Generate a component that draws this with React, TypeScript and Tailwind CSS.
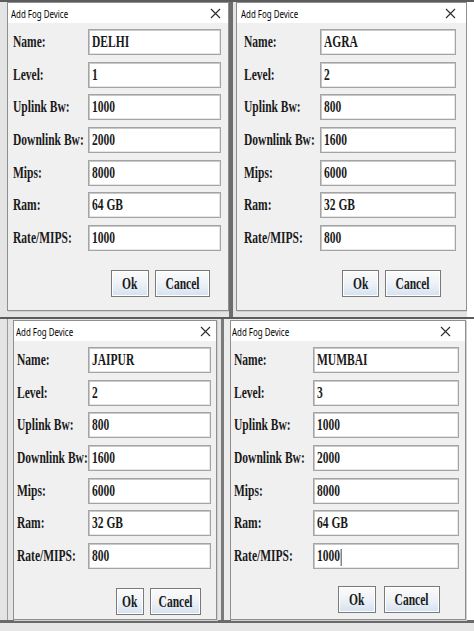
import React from 'react';

type Field = [string, string];

const serif = "font-['Liberation_Serif','Times_New_Roman',serif]";

const Sq: React.FC<{ children: React.ReactNode; center?: boolean }> = ({ children, center }) => (
  <span
    className={
      center
        ? 'inline-block whitespace-nowrap origin-center scale-x-[0.72]'
        : 'inline-block whitespace-nowrap origin-left scale-x-[0.72]'
    }
  >
    {children}
  </span>
);

const CloseX = () => (
  <svg width="11" height="11" viewBox="0 0 11 11" className="shrink-0">
    <path d="M1 1 L10 10 M10 1 L1 10" stroke="#2b2b2b" strokeWidth="1.1" fill="none" />
  </svg>
);

type DialogProps = {
  fields: Field[];
  box: string; // size + position of the dialog
  titleBar: string; // padding for title text and close glyph
  body: string; // body padding
  labelCol: string;
  inputW: string;
  buttons: string; // padding right / spacing
  okW: string;
  cancelW: string;
  cursor?: boolean;
};

const Dialog: React.FC<DialogProps> = ({ fields, box, titleBar, body, labelCol, inputW, buttons, okW, cancelW, cursor }) => (
  <div className={`flex flex-col border border-[#8f8f8f] bg-[#f0f0f0] shadow-[1px_1px_0_#cfcfcf] ${box}`}>
    <div className={`h-[20px] bg-white flex items-center justify-between ${titleBar}`}>
      <span className="text-[11px] leading-none text-black font-['Noto_Sans','Liberation_Sans',sans-serif]">
        <Sq>Add Fog Device</Sq>
      </span>
      <CloseX />
    </div>
    <div className={`flex flex-col flex-1 ${body}`}>
      <div className="flex flex-col gap-[6.7px]">
        {fields.map(([label, value], i) => (
          <div key={label} className="flex items-center h-[26px]">
            <div className={`${labelCol} shrink-0 text-[16px] font-bold text-[#1a1a1a] ${serif}`}>
              <Sq>{label}</Sq>
            </div>
            <div
              className={`${inputW} h-[26px] bg-white border border-[#a4a4a4] shadow-[inset_1px_1px_0_#c8c8c8,inset_-1px_-1px_0_#e6e6e6] flex items-center pl-[3px] overflow-hidden text-[16px] font-bold text-[#1a1a1a] ${serif}`}
            >
              <Sq>
                {value}
                {cursor && i === fields.length - 1 ? (
                  <span className="inline-block w-px h-[17px] bg-black align-middle ml-px" />
                ) : null}
              </Sq>
            </div>
          </div>
        ))}
      </div>
      <div className={`flex justify-end ${buttons}`}>
        {[
          ['Ok', okW],
          ['Cancel', cancelW],
        ].map(([t, w]) => (
          <div
            key={t}
            className={`${w} h-[27px] flex items-center justify-center border border-[#7a7a7a] bg-gradient-to-b from-[#fbfbfb] via-[#eef2f7] to-[#d4e2f1] shadow-[inset_0_0_0_1px_#ffffff] text-[16px] font-bold text-[#1a1a1a] ${serif}`}
          >
            <Sq center>{t}</Sq>
          </div>
        ))}
      </div>
    </div>
  </div>
);

const delhi: Field[] = [
  ['Name:', 'DELHI'],
  ['Level:', '1'],
  ['Uplink Bw:', '1000'],
  ['Downlink Bw:', '2000'],
  ['Mips:', '8000'],
  ['Ram:', '64 GB'],
  ['Rate/MIPS:', '1000'],
];
const agra: Field[] = [
  ['Name:', 'AGRA'],
  ['Level:', '2'],
  ['Uplink Bw:', '800'],
  ['Downlink Bw:', '1600'],
  ['Mips:', '6000'],
  ['Ram:', '32 GB'],
  ['Rate/MIPS:', '800'],
];
const jaipur: Field[] = [
  ['Name:', 'JAIPUR'],
  ['Level:', '2'],
  ['Uplink Bw:', '800'],
  ['Downlink Bw:', '1600'],
  ['Mips:', '6000'],
  ['Ram:', '32 GB'],
  ['Rate/MIPS:', '800'],
];
const mumbai: Field[] = [
  ['Name:', 'MUMBAI'],
  ['Level:', '3'],
  ['Uplink Bw:', '1000'],
  ['Downlink Bw:', '2000'],
  ['Mips:', '8000'],
  ['Ram:', '64 GB'],
  ['Rate/MIPS:', '1000'],
];

export default function App() {
  return (
    <div className="w-[474px] h-[631px] bg-white overflow-hidden flex flex-col">
      {/* top row */}
      <div className="h-[317px] flex border-t-2 border-[#5c5c5c] shrink-0">
        <div className="w-[229px] bg-[#e4e4e4] pl-[7px]">
          <Dialog
            fields={delhi}
            box="w-[222px] h-[309px]"
            titleBar="pl-[3px] pr-[7px]"
            body="pt-[6px] pl-[5px] pr-[7px]"
            labelCol="w-[75px]"
            inputW="w-[134px]"
            buttons="mt-[19px] gap-[6px] pr-[11px]"
            okW="w-[38px]"
            cancelW="w-[55px]"
          />
        </div>
        <div className="w-[4px] bg-[#6d6d6d]" />
        <div className="w-[234px] bg-[#e4e4e4] pl-[3px]">
          <Dialog
            fields={agra}
            box="w-[231px] h-[309px]"
            titleBar="pl-[4px] pr-[10px]"
            body="pt-[6px] pl-[7px] pr-[10px]"
            labelCol="w-[76px]"
            inputW="w-[136px]"
            buttons="mt-[19px] gap-[6px] pr-[15px]"
            okW="w-[37px]"
            cancelW="w-[56px]"
          />
        </div>
        <div className="flex-1 bg-white" />
      </div>
      {/* bottom row */}
      <div className="h-[306px] flex border-t-2 border-[#5c5c5c] border-b-[3px] border-b-[#6a6a6a] shrink-0">
        <div className="w-[221px] bg-[#e4e4e4] pl-[7px]">
          <div className="h-full border-l border-[#9a9a9a] pl-[5px] pt-px">
            <Dialog
              fields={jaipur}
              box="w-[204px] h-[300px]"
              titleBar="pl-[2px] pr-[5px]"
              body="pt-[6px] pl-[3px] pr-[5px]"
              labelCol="w-[71px]"
              inputW="w-[124px]"
              buttons="mt-[19px] gap-[6px] pr-[10px]"
              okW="w-[28px]"
              cancelW="w-[51px]"
            />
          </div>
        </div>
        <div className="w-[3px] bg-[#7a7a7a]" />
        <div className="w-[243px] bg-[#ececec] pl-[6px] pt-px">
          <Dialog
            fields={mumbai}
            box="w-[236px] h-[300px]"
            titleBar="pl-[1px] pr-[14px]"
            body="pt-[6px] pl-[3px] pr-[6px]"
            labelCol="w-[79px]"
            inputW="w-[147px]"
            buttons="mt-[17px] gap-[8px] pr-[19px]"
            okW="w-[38px]"
            cancelW="w-[56px]"
            cursor
          />
        </div>
        <div className="flex-1 bg-white" />
      </div>
      <div className="flex-1 bg-[#e6e6e6]" />
    </div>
  );
}
